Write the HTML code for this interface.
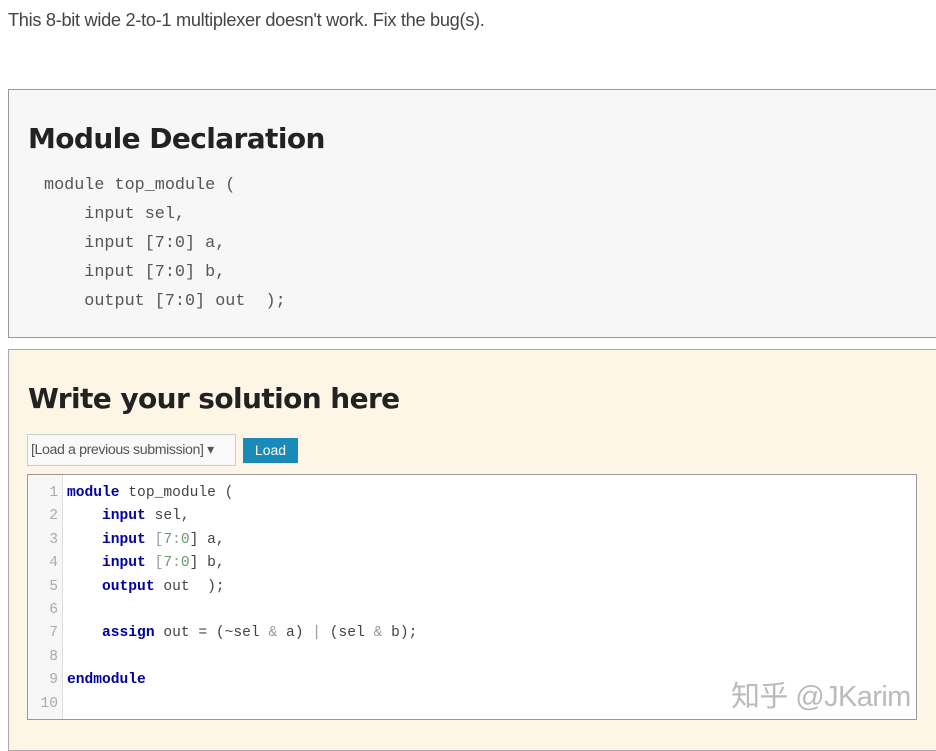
<!DOCTYPE html>
<html><head><meta charset="utf-8"><style>
body{margin:0;width:936px;height:730px;overflow:hidden;background:#fff;font-family:"Liberation Sans",sans-serif;position:relative}
.p{position:absolute;left:8px;top:10px;font-size:18.2px;color:#444;letter-spacing:-0.3px}
.b1{position:absolute;left:8px;top:89px;width:940px;height:247px;background:#f7f7f7;border:1px solid #999}
.b2{position:absolute;left:8px;top:349px;width:940px;height:400px;background:#fdf5e6;border:1px solid #aaa}
h2{position:absolute;margin:0;font-family:"DejaVu Sans",sans-serif;font-weight:bold;font-size:28px;color:#222;letter-spacing:-0.6px}
.decl{position:absolute;font-family:"Liberation Mono",monospace;font-size:16.8px;line-height:29px;color:#555;white-space:pre;margin:0}
.sel{position:absolute;left:18px;top:84px;width:209px;height:32px;background:#f9f9f9;border:1px solid #ccc;font-size:14.2px;color:#555;line-height:30px;padding-left:3px;box-sizing:border-box;letter-spacing:-0.4px}
.btn{position:absolute;left:234px;top:88px;width:55px;height:25px;background:#1a8bb8;color:#fff;font-size:14px;text-align:center;line-height:25px}
.ed{position:absolute;left:18px;top:124px;width:890px;height:246px;background:#fff;border:1px solid #999;box-sizing:border-box}
.gut{position:absolute;left:0;top:0;width:34px;height:100%;background:#f7f7f7;border-right:1px solid #ddd}
.ln{position:absolute;left:0;top:7px;width:30px;text-align:right;font-family:"Liberation Mono",monospace;font-size:14.6px;line-height:23.4px;color:#aaa;white-space:pre;margin:0}
.code{position:absolute;left:39px;top:7px;font-family:"Liberation Mono",monospace;font-size:14.6px;line-height:23.4px;color:#444;white-space:pre;margin:0}
.k{color:#0000a0;font-weight:bold}.n{color:#6a9a6a}.o{color:#999}
.wm{position:absolute;left:731px;top:673px;font-size:29px;color:#bbb;font-family:"Liberation Sans","Noto Sans CJK SC",sans-serif;text-shadow:1px 1px 0 #fff;letter-spacing:-0.6px}
</style></head><body>
<div class="p">This 8-bit wide 2-to-1 multiplexer doesn't work. Fix the bug(s).</div>
<div class="b1">
<h2 style="left:19px;top:32px">Module Declaration</h2>
<pre class="decl" style="left:35px;top:81px">module top_module (
    input sel,
    input [7:0] a,
    input [7:0] b,
    output [7:0] out  );</pre>
</div>
<div class="b2">
<h2 style="left:19px;top:32px">Write your solution here</h2>
<div class="sel">[Load a previous submission] ▾</div>
<div class="btn">Load</div>
<div class="ed"><div class="gut"></div>
<pre class="ln">1
2
3
4
5
6
7
8
9
10</pre>
<pre class="code"><span class="k">module</span> top_module (
    <span class="k">input</span> sel,
    <span class="k">input</span> <span class="o">[</span><span class="n">7</span><span class="o">:</span><span class="n">0</span>] a,
    <span class="k">input</span> <span class="o">[</span><span class="n">7</span><span class="o">:</span><span class="n">0</span>] b,
    <span class="k">output</span> out  );

    <span class="k">assign</span> out = (~sel <span class="o">&amp;</span> a) <span class="o">|</span> (sel <span class="o">&amp;</span> b);

<span class="k">endmodule</span>
</pre>
</div>
</div>
<div class="wm">知乎 @JKarim</div>
</body></html>
